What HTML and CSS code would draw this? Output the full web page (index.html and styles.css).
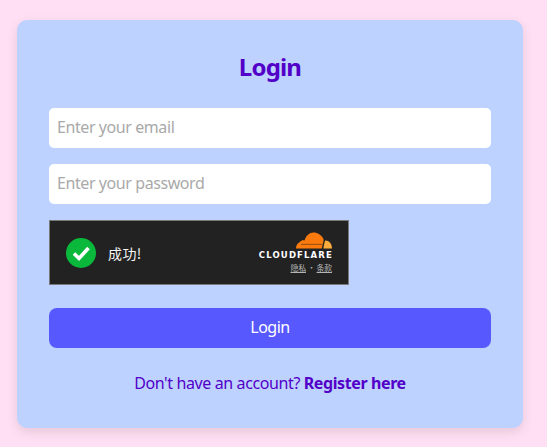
FILE: index.html
```html
<!DOCTYPE html>
<html lang="en">
<head>
<meta charset="utf-8">
<title>Login</title>
<link rel="stylesheet" href="styles.css">
</head>
<body>
<main class="card">
  <h1 class="title">Login</h1>
  <form class="form">
    <input class="field" type="email" placeholder="Enter your email">
    <input class="field" type="password" placeholder="Enter your password">
    <div class="captcha">
      <div class="captcha-status">
        <svg class="check" viewBox="0 0 30 30" aria-hidden="true">
          <circle cx="15" cy="15" r="15" fill="#0ab93c"/>
          <path d="M8 15.5l5 5L22.5 10" fill="none" stroke="#fff" stroke-width="3.6"/>
        </svg>
        <span class="captcha-text">成功!</span>
      </div>
      <div class="brand">
        <svg class="cloud" viewBox="0 0 36 17" aria-hidden="true">
          <path fill="#fa7a0e" d="M0 16.5C0 13.500 1.500 11 4 10C5 8.800 6.500 8 8.500 8.500C10 3.500 13.500 .5 17.500 .5C21.500 .5 25.500 3 27.500 7C27.800 9 27 11 26.500 13C26.200 14.500 26 15.500 25.800 16.500Z"/>
          <path fill="#fbab3c" d="M27.300 16.500C27.800 13.500 28.500 11 29 8.500C33 8.300 36 11.500 36 16.500Z"/>
          <path fill="#6b3a12" d="M5 11.900H26V12.600H5Z"/>
        </svg>
        <span class="wordmark">CLOUDFLARE</span>
        <span class="legal"><a class="legal-link">隐私</a> · <a class="legal-link">条款</a></span>
      </div>
    </div>
    <button class="submit" type="button">Login</button>
  </form>
  <p class="footer">Don't have an account? <a class="register">Register here</a></p>
</main>
</body>
</html>
```
FILE: styles.css
```css
* { box-sizing: border-box; }
html, body { height: 100%; }
body {
  margin: 0;
  padding: 20px 24px 0 17px;
  background: #ffdff3;
  font-family: "Noto Sans", "Noto Sans CJK SC", sans-serif;
  overflow: hidden;
}
.card {
  width: 506px;
  height: 408px;
  padding: 31px 32px 32px;
  background: #bdd2ff;
  border-radius: 10px;
  box-shadow: 0 4px 12px rgba(0, 0, 0, 0.1);
}
.title {
  margin: 0 0 25px;
  height: 32px;
  font-size: 24px;
  line-height: 32px;
  font-weight: 700;
  letter-spacing: -0.8px;
  text-align: center;
  color: #5200c8;
}
.form { display: flex; flex-direction: column; align-items: flex-start; }
.field {
  width: 100%;
  height: 40px;
  margin-bottom: 16px;
  padding: 0 8px 2px;
  border: 0;
  border-radius: 5px;
  background: #fff;
  font: 16px/24px "Noto Sans", sans-serif;
  letter-spacing: -0.42px;
}
.field::placeholder { color: #a9a9a9; opacity: 1; }
.captcha {
  display: flex;
  justify-content: space-between;
  align-items: center;
  width: 300px;
  height: 65px;
  padding: 0 16px;
  background: #222;
  border: 1px solid #797979;
}
.captcha-status { display: flex; align-items: center; gap: 12px; }
.check { width: 30px; height: 30px; display: block; }
.captcha-text {
  font: 14px/20px "Noto Sans CJK SC", sans-serif;
  letter-spacing: 0.4px;
  color: #f6f6f6;
}
.brand {
  display: flex;
  flex-direction: column;
  align-items: flex-end;
}
.cloud { width: 36px; height: 17px; display: block; }
.wordmark {
  margin-top: 1px;
  margin-right: -1px;
  font: 700 8.5px/10px "DejaVu Sans", sans-serif;
  letter-spacing: 1.15px;
  color: #fff;
}
.legal {
  margin-top: 2px;
  font: 8px/11px "Noto Sans CJK SC", sans-serif;
  letter-spacing: -0.3px;
  color: #b5b5b5;
}
.legal-link { text-decoration: underline; }
.submit {
  width: 100%;
  height: 40px;
  margin-top: 23px;
  padding: 0 0 2px;
  border: 0;
  border-radius: 8px;
  background: #5858ff;
  color: #fff;
  font: 16px/24px "Noto Sans", sans-serif;
  letter-spacing: -0.5px;
}
.footer {
  margin: 23px 0 0;
  font-size: 16px;
  line-height: 24px;
  letter-spacing: -0.39px;
  text-align: center;
  color: #5200c8;
}
.register { font-weight: 700; }
```
